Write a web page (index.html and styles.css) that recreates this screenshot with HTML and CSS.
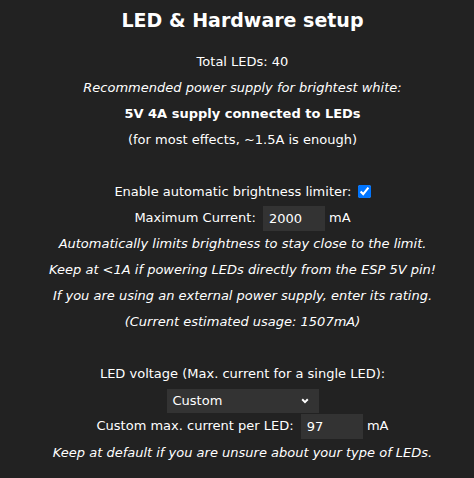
FILE: index.html
```html
<!DOCTYPE html>
<html>
<head>
<meta charset="utf-8">
<link rel="stylesheet" href="styles.css">
</head>
<body>
<div class="page">
  <h2 class="title">LED &amp; Hardware setup</h2>
  <div class="line">Total LEDs: 40</div>
  <div class="line"><i>Recommended power supply for brightest white:</i></div>
  <div class="line"><b>5V 4A supply connected to LEDs</b></div>
  <div class="line">(for most effects, ~1.5A is enough)</div>
  <div class="gap"></div>
  <div class="line">Enable automatic brightness limiter: <input class="check" type="checkbox" checked></div>
  <div class="line">Maximum Current: <input class="num" type="text" value="2000"> mA</div>
  <div class="line"><i>Automatically limits brightness to stay close to the limit.</i></div>
  <div class="line"><i>Keep at &lt;1A if powering LEDs directly from the ESP 5V pin!</i></div>
  <div class="line"><i>If you are using an external power supply, enter its rating.</i></div>
  <div class="line"><i>(Current estimated usage: 1507mA)</i></div>
  <div class="gap"></div>
  <div class="line">LED voltage (Max. current for a single LED):</div>
  <div class="line sel-row"><span class="sel"><span class="sel-text">Custom</span><svg class="chev" width="8" height="6" viewBox="0 0 8 6"><path d="M1.2 1.3 L4 4.1 L6.8 1.3" fill="none" stroke="#fff" stroke-width="2"/></svg></span></div>
  <div class="line row">Custom max. current per LED: <input class="num" type="text" value="97"> mA</div>
  <div class="line"><i>Keep at default if you are unsure about your type of LEDs.</i></div>
</div>
</body>
</html>
```

FILE: styles.css
```css
html, body {
  margin: 0;
  padding: 0;
  background: #222;
}
body {
  color: #fff;
  font-family: "DejaVu Sans", Verdana, sans-serif;
  font-size: 13px;
}
.page {
  padding-left: 11px;
  text-align: center;
}
.title {
  font-size: 19px;
  font-weight: bold;
  line-height: 38px;
  margin: 1px 0 10px;
}
.line {
  height: 26px;
  line-height: 26px;
  white-space: nowrap;
}
.gap {
  height: 26px;
}
.sel-row {
  height: 25px;
  line-height: 25px;
}
.row {
  height: 28px;
  line-height: 28px;
}
.check {
  width: 13px;
  height: 13px;
  margin: 0 0 0 2px;
  vertical-align: -2px;
  accent-color: #0075ff;
}
.num {
  box-sizing: border-box;
  width: 62px;
  height: 25px;
  margin: 0 0 0 3px;
  padding: 0 6px;
  border: none;
  background: #333;
  color: #fff;
  font-family: "DejaVu Sans", Verdana, sans-serif;
  font-size: 13px;
  text-align: left;
  vertical-align: middle;
  outline: none;
}
.sel {
  position: relative;
  display: inline-block;
  box-sizing: border-box;
  width: 152px;
  height: 24px;
  line-height: 24px;
  padding-left: 6px;
  background: #333;
  text-align: left;
  vertical-align: middle;
}
.chev {
  position: absolute;
  right: 10px;
  top: 9px;
}
```
